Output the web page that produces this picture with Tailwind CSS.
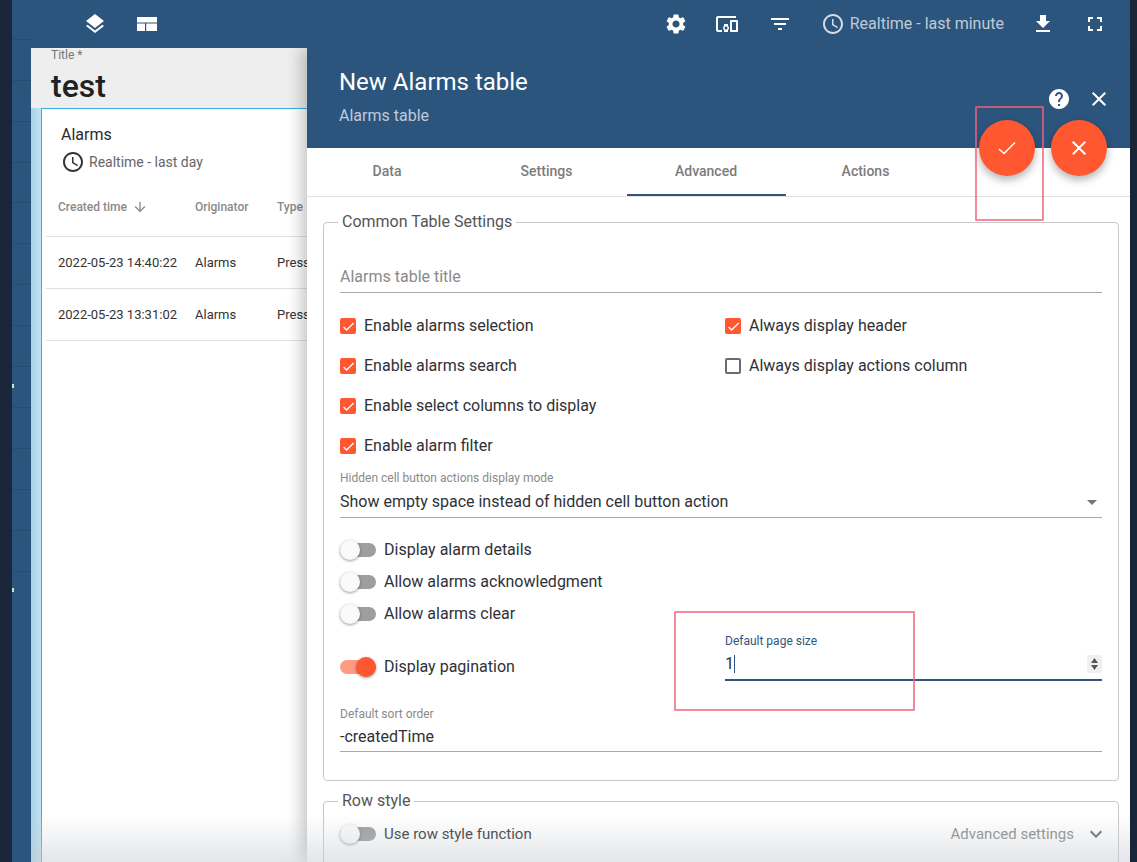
<!DOCTYPE html>
<html lang="en">
<head>
  <meta charset="UTF-8" />
  <title>New Alarms table</title>
  <script src="https://cdn.jsdelivr.net/npm/@tailwindcss/browser@4"></script>
</head>
<body class="bg-[#1a263a] font-['Roboto',sans-serif] text-[#2f3136]">
  <div class="relative flex w-[1137px] h-[862px] overflow-hidden bg-[#1a263a]">

    <!-- grid strip on the far left -->
    <div class="relative ml-[12px] w-[19px] h-full bg-[#2c557d] shrink-0">
      <div class="h-[40px] border-b border-[#274c70]"></div>
      <div class="h-[41px] border-b border-[#274c70]"></div>
      <div class="h-[41px] border-b border-[#274c70]"></div>
      <div class="h-[41px] border-b border-[#274c70]"></div>
      <div class="h-[40px] border-b border-[#274c70]"></div>
      <div class="h-[41px] border-b border-[#274c70]"></div>
      <div class="h-[41px] border-b border-[#274c70]"></div>
      <div class="h-[41px] border-b border-[#274c70]"></div>
      <div class="h-[41px] border-b border-[#274c70]"></div>
      <div class="h-[41px] border-b border-[#274c70]"></div>
      <div class="h-[41px] border-b border-[#274c70]"></div>
      <div class="h-[41px] border-b border-[#274c70]"></div>
      <div class="h-[41px] border-b border-[#274c70]"></div>
      <div class="h-[41px] border-b border-[#274c70]"></div>
      <div class="absolute left-0 top-[384px] w-[2px] h-[4px] bg-white/80"></div>
      <div class="absolute left-0 top-[588px] w-[2px] h-[4px] bg-white/80"></div>
    </div>

    <div class="flex flex-col w-[1099px] h-full shrink-0">
      <!-- top bar -->
      <div class="relative z-20 flex items-center h-[48px] bg-[#2c557d] text-white pl-[52px] pr-[23px]">
        <svg class="w-6 h-6" viewBox="0 0 24 24" fill="#fff"><path d="M11.99 18.54l-7.37-5.73L3 14.07l9 7 9-7-1.63-1.27-7.38 5.74zM12 16l7.36-5.73L21 9l-9-7-9 7 1.63 1.27L12 16z"/></svg>
        <svg class="w-6 h-6 ml-[28px]" viewBox="0 0 24 24" fill="#fff"><path d="M2 5h20v5.4H2zM2 11.6h8v7.4H2zM11.2 11.6H22v7.4H11.2z"/></svg>
        <svg class="w-6 h-6 ml-auto" viewBox="0 0 24 24" fill="#fff"><path d="M19.14 12.94c.04-.3.06-.61.06-.94 0-.32-.02-.64-.07-.94l2.03-1.58c.18-.14.23-.41.12-.61l-1.92-3.32c-.12-.22-.37-.29-.59-.22l-2.39.96c-.5-.38-1.03-.7-1.62-.94l-.36-2.54c-.04-.24-.24-.41-.48-.41h-3.84c-.24 0-.43.17-.47.41l-.36 2.54c-.59.24-1.13.57-1.62.94l-2.39-.96c-.22-.08-.47 0-.59.22L2.74 8.87c-.12.21-.08.47.12.61l2.03 1.58c-.05.3-.09.63-.09.94s.02.64.07.94l-2.03 1.58c-.18.14-.23.41-.12.61l1.92 3.32c.12.22.37.29.59.22l2.39-.96c.5.38 1.03.7 1.62.94l.36 2.54c.05.24.24.41.48.41h3.84c.24 0 .44-.17.47-.41l.36-2.54c.59-.24 1.13-.56 1.62-.94l2.39.96c.22.08.47 0 .59-.22l1.92-3.32c.12-.22.07-.47-.12-.61l-2.01-1.58zM12 15.6c-1.98 0-3.6-1.62-3.6-3.6s1.62-3.6 3.6-3.6 3.6 1.62 3.6 3.6-1.62 3.6-3.6 3.6z"/></svg>
        <svg class="w-6 h-6 ml-[27px]" viewBox="0 0 24 24" fill="#fff"><path d="M3 6h18V4H3c-1.1 0-2 .9-2 2v12c0 1.1.9 2 2 2h4v-2H3V6zm10 6H9v1.78c-.61.55-1 1.33-1 2.22s.39 1.67 1 2.22V20h4v-1.78c.61-.55 1-1.34 1-2.22s-.39-1.67-1-2.22V12zm-2 5.5c-.83 0-1.5-.67-1.5-1.5s.67-1.5 1.5-1.5 1.5.67 1.5 1.5-.67 1.5-1.5 1.5zM22 8h-6c-.5 0-1 .5-1 1v10c0 .5.5 1 1 1h6c.5 0 1-.5 1-1V9c0-.5-.5-1-1-1zm-1 10h-4v-8h4v8z"/></svg>
        <svg class="w-6 h-6 ml-[29px]" viewBox="0 0 24 24" fill="#fff"><path d="M10 18h4v-2h-4v2zM3 6v2h18V6H3zm3 7h12v-2H6v2z"/></svg>
        <svg class="w-6 h-6 ml-[29px]" viewBox="0 0 24 24" fill="#fff" fill-opacity="0.8"><path d="M11.99 2C6.47 2 2 6.48 2 12s4.47 10 9.99 10C17.52 22 22 17.52 22 12S17.52 2 11.99 2zM12 20c-4.42 0-8-3.58-8-8s3.58-8 8-8 8 3.58 8 8-3.58 8-8 8zm.5-13H11v6l5.25 3.15.75-1.23-4.5-2.67z"/></svg>
        <span class="ml-[5px] text-base text-white/70">Realtime - last minute</span>
        <svg class="w-6 h-6 ml-[27px]" viewBox="0 0 24 24" fill="#fff"><path d="M19 9h-4V3H9v6H5l7 7 7-7zM5 18v2h14v-2H5z"/></svg>
        <svg class="w-6 h-6 ml-[28px]" viewBox="0 0 24 24" fill="#fff"><path d="M7 14H5v5h5v-2H7v-3zm-2-4h2V7h3V5H5v5zm12 7h-3v2h5v-5h-2v3zM14 5v2h3v3h2V5h-5z"/></svg>
      </div>

      <div class="flex flex-1 min-h-0">
        <!-- dashboard behind the drawer -->
        <div class="flex flex-col w-[276px] shrink-0 overflow-hidden">
          <div class="h-[60px] bg-[#eeeeee] pl-[20px] pt-[1px]">
            <div class="text-xs leading-[12px] text-[#757575]">Title *</div>
            <div class="mt-[6px] text-[32px] leading-[38px] font-medium text-[#212121]">test</div>
          </div>
          <div class="flex flex-1 min-h-0">
            <div class="w-[10px] shrink-0 bg-gradient-to-r from-[#a6d2e7] to-[#c2e2f0]"></div>
            <div class="flex-1 bg-white border-l border-t border-[#3ab0e6] pl-[4px]">
              <div class="pl-[15px] pt-[16px] text-base leading-[20px] text-[#2b2b2b]">Alarms</div>
              <div class="flex items-center pl-[15px] mt-[5px] h-[24px]">
                <svg class="w-6 h-6" viewBox="0 0 24 24" fill="#333"><path d="M11.99 2C6.47 2 2 6.48 2 12s4.47 10 9.99 10C17.52 22 22 17.52 22 12S17.52 2 11.99 2zM12 20c-4.42 0-8-3.58-8-8s3.58-8 8-8 8 3.58 8 8-3.58 8-8 8zm.5-13H11v6l5.25 3.15.75-1.23-4.5-2.67z"/></svg>
                <span class="ml-[4px] text-sm text-[#666]">Realtime - last day</span>
              </div>
              <div class="flex items-center h-[63px] border-b border-[#e0e0e0] pt-[4px] pl-[12px] text-xs font-medium text-[#8a8a8a] whitespace-nowrap">
                <span class="w-[137px] flex items-center">Created time
                  <svg class="w-4 h-4 ml-[5px]" viewBox="0 0 24 24" fill="#8a8a8a"><path d="M20 12l-1.41-1.41L13 16.17V4h-2v12.17l-5.58-5.59L4 12l8 8 8-8z"/></svg>
                </span>
                <span class="w-[82px]">Originator</span>
                <span>Type</span>
              </div>
              <div class="flex items-center h-[52px] border-b border-[#e0e0e0] pl-[12px] text-[13px] text-[#333] whitespace-nowrap">
                <span class="w-[137px]">2022-05-23 14:40:22</span>
                <span class="w-[82px]">Alarms</span>
                <span>Press</span>
              </div>
              <div class="flex items-center h-[52px] border-b border-[#e0e0e0] pl-[12px] text-[13px] text-[#333] whitespace-nowrap">
                <span class="w-[137px]">2022-05-23 13:31:02</span>
                <span class="w-[82px]">Alarms</span>
                <span>Press</span>
              </div>
            </div>
          </div>
        </div>

        <!-- drawer -->
        <div class="relative z-10 flex flex-col w-[823px] shrink-0 bg-white shadow-[-6px_0_14px_rgba(0,0,0,0.22)]">
          <div class="h-[100px] bg-[#2c557d] pl-[32px] pt-[18px] shrink-0">
            <div class="text-2xl leading-[32px] text-white">New Alarms table</div>
            <div class="mt-[6px] text-base leading-[24px] text-white/70">Alarms table</div>
          </div>

          <div class="flex h-[49px] shrink-0 border-b border-[#e0e0e0] text-sm font-medium text-[#7c7c7c]">
            <div class="flex items-center justify-center w-[160px] border-b-2 border-transparent">Data</div>
            <div class="flex items-center justify-center w-[160px] pr-[1px] border-b-2 border-transparent">Settings</div>
            <div class="flex items-center justify-center w-[159px] pr-[1px] border-b-2 border-[#305680]">Advanced</div>
            <div class="flex items-center justify-center w-[160px] pr-[1px] border-b-2 border-transparent">Actions</div>
          </div>

          <div class="flex-1 min-h-0 overflow-hidden pl-[16px] pr-[11px] pt-[13px]">
            <fieldset class="border border-[#c8c8c8] rounded-[4px] pl-[16px] pr-[16px] pb-[28px]">
              <legend class="-ml-[2px] px-[4px] text-base leading-[24px] text-[#555]">Common Table Settings</legend>

              <div class="flex items-end h-[59px] border-b border-[#a8a8a8] pb-[3px] text-base leading-[24px] text-[#8a8a8a]">Alarms table title</div>

              <div class="grid grid-cols-[385px_1fr] mt-[13px] text-base">
                <div class="flex items-center h-[40px]">
                  <span class="flex items-center justify-center w-[16px] h-[16px] rounded-[2px] bg-[#ff5730]"><svg class="w-[15px] h-[15px]" viewBox="0 0 24 24" fill="#fff"><path d="M9 16.17L4.83 12l-1.42 1.41L9 19 21 7l-1.41-1.41z"/></svg></span>
                  <span class="ml-[8px]">Enable alarms selection</span>
                </div>
                <div class="flex items-center h-[40px]">
                  <span class="flex items-center justify-center w-[16px] h-[16px] rounded-[2px] bg-[#ff5730]"><svg class="w-[15px] h-[15px]" viewBox="0 0 24 24" fill="#fff"><path d="M9 16.17L4.83 12l-1.42 1.41L9 19 21 7l-1.41-1.41z"/></svg></span>
                  <span class="ml-[8px]">Always display header</span>
                </div>
                <div class="flex items-center h-[40px]">
                  <span class="flex items-center justify-center w-[16px] h-[16px] rounded-[2px] bg-[#ff5730]"><svg class="w-[15px] h-[15px]" viewBox="0 0 24 24" fill="#fff"><path d="M9 16.17L4.83 12l-1.42 1.41L9 19 21 7l-1.41-1.41z"/></svg></span>
                  <span class="ml-[8px]">Enable alarms search</span>
                </div>
                <div class="flex items-center h-[40px]">
                  <span class="w-[16px] h-[16px] rounded-[2px] border-2 border-[#6b6b6b]"></span>
                  <span class="ml-[8px]">Always display actions column</span>
                </div>
                <div class="flex items-center h-[40px]">
                  <span class="flex items-center justify-center w-[16px] h-[16px] rounded-[2px] bg-[#ff5730]"><svg class="w-[15px] h-[15px]" viewBox="0 0 24 24" fill="#fff"><path d="M9 16.17L4.83 12l-1.42 1.41L9 19 21 7l-1.41-1.41z"/></svg></span>
                  <span class="ml-[8px]">Enable select columns to display</span>
                </div>
                <div></div>
                <div class="flex items-center h-[40px]">
                  <span class="flex items-center justify-center w-[16px] h-[16px] rounded-[2px] bg-[#ff5730]"><svg class="w-[15px] h-[15px]" viewBox="0 0 24 24" fill="#fff"><path d="M9 16.17L4.83 12l-1.42 1.41L9 19 21 7l-1.41-1.41z"/></svg></span>
                  <span class="ml-[8px]">Enable alarm filter</span>
                </div>
              </div>

              <div class="mt-[4px] border-b border-[#a8a8a8] pb-[3px]">
                <div class="text-xs leading-[16px] text-[#8a8a8a]">Hidden cell button actions display mode</div>
                <div class="flex items-center justify-between mt-[4px] text-base leading-[24px]">
                  <span>Show empty space instead of hidden cell button action</span>
                  <span class="w-0 h-0 mr-[5px] border-x-[5px] border-x-transparent border-t-[5px] border-t-[#757575]"></span>
                </div>
              </div>

              <div class="mt-[16px] text-base">
                <div class="flex items-center h-[32px]">
                  <span class="relative block w-[36px] h-[14px] rounded-full bg-[#9e9e9e]"><span class="absolute left-0 -top-[3px] w-[20px] h-[20px] rounded-full bg-[#fafafa] shadow-[0_1px_3px_rgba(0,0,0,0.4)]"></span></span>
                  <span class="ml-[8px]">Display alarm details</span>
                </div>
                <div class="flex items-center h-[32px]">
                  <span class="relative block w-[36px] h-[14px] rounded-full bg-[#9e9e9e]"><span class="absolute left-0 -top-[3px] w-[20px] h-[20px] rounded-full bg-[#fafafa] shadow-[0_1px_3px_rgba(0,0,0,0.4)]"></span></span>
                  <span class="ml-[8px]">Allow alarms acknowledgment</span>
                </div>
                <div class="flex items-center h-[32px]">
                  <span class="relative block w-[36px] h-[14px] rounded-full bg-[#9e9e9e]"><span class="absolute left-0 -top-[3px] w-[20px] h-[20px] rounded-full bg-[#fafafa] shadow-[0_1px_3px_rgba(0,0,0,0.4)]"></span></span>
                  <span class="ml-[8px]">Allow alarms clear</span>
                </div>
              </div>

              <div class="grid grid-cols-[385px_1fr] mt-[3px] text-base">
                <div class="flex items-center h-[28px] mt-[20px]">
                  <span class="relative block w-[36px] h-[14px] rounded-full bg-[#ff9a83]"><span class="absolute right-0 -top-[3px] w-[20px] h-[20px] rounded-full bg-[#ff5730] shadow-[0_1px_3px_rgba(0,0,0,0.4)]"></span></span>
                  <span class="ml-[8px]">Display pagination</span>
                </div>
                <div class="border-b-2 border-[#305680] pb-[3px]">
                  <div class="text-xs leading-[16px] text-[#305680]">Default page size</div>
                  <div class="flex items-center justify-between mt-[3px] leading-[24px]">
                    <span class="flex items-center"><span>1</span><span class="w-px h-[18px] bg-[#305680]"></span></span>
                    <span class="flex items-center justify-center w-[15px] h-[18px] bg-[#f0f0f0]">
                      <svg class="w-[9px] h-[14px]" viewBox="0 0 9 14" fill="#555"><path d="M4.5 1L8 6H1zM4.5 13L1 8h7z"/></svg>
                    </span>
                  </div>
                </div>
              </div>

              <div class="mt-[25px] border-b border-[#a8a8a8] pb-[2px]">
                <div class="text-xs leading-[16px] text-[#8a8a8a]">Default sort order</div>
                <div class="mt-[3px] text-base leading-[24px]">-createdTime</div>
              </div>
            </fieldset>

            <fieldset class="mt-[8px] border border-[#c8c8c8] rounded-[4px] pl-[16px] pr-[16px] pt-[5px] pb-[16px]">
              <legend class="-ml-[2px] px-[4px] text-base leading-[24px] text-[#555]">Row style</legend>
              <div class="flex items-center h-[32px]">
                <span class="relative block w-[36px] h-[14px] rounded-full bg-[#9e9e9e]"><span class="absolute left-0 -top-[3px] w-[20px] h-[20px] rounded-full bg-[#fafafa] shadow-[0_1px_3px_rgba(0,0,0,0.4)]"></span></span>
                <span class="ml-[8px] text-[15px]">Use row style function</span>
                <span class="ml-auto text-[15px] text-[#8a8a8a]">Advanced settings</span>
                <svg class="w-6 h-6 ml-[10px] -mr-[6px]" viewBox="0 0 24 24" fill="#666"><path d="M16.59 8.59L12 13.17 7.41 8.59 6 10l6 6 6-6z"/></svg>
              </div>
            </fieldset>
          </div>

          <!-- help / close -->
          <svg class="absolute left-[740px] top-[39px] w-6 h-6" viewBox="0 0 24 24" fill="#fff"><path d="M12 2C6.48 2 2 6.48 2 12s4.48 10 10 10 10-4.48 10-10S17.52 2 12 2zm1 17h-2v-2h2v2zm2.07-7.75l-.9.92C13.45 12.9 13 13.5 13 15h-2v-.5c0-1.1.45-2.1 1.17-2.83l1.24-1.26c.37-.36.59-.86.59-1.41 0-1.1-.9-2-2-2s-2 .9-2 2H8c0-2.21 1.79-4 4-4s4 1.79 4 4c0 .88-.36 1.68-.93 2.25z"/></svg>
          <svg class="absolute left-[780px] top-[39px] w-6 h-6" viewBox="0 0 24 24" fill="#fff"><path d="M19 6.41L17.59 5 12 10.59 6.41 5 5 6.41 10.59 12 5 17.59 6.41 19 12 13.41 17.59 19 19 17.59 13.41 12z"/></svg>

          <!-- floating buttons -->
          <div class="absolute left-[672px] top-[72px] flex items-center justify-center w-[56px] h-[56px] rounded-full bg-[#ff5730] shadow-[0_4px_8px_rgba(0,0,0,0.3)]">
            <svg class="w-6 h-6" viewBox="0 0 24 24" fill="none" stroke="#fff" stroke-width="1.5"><path d="M4 13L9 17.5 20 6.5"/></svg>
          </div>
          <div class="absolute left-[744px] top-[72px] flex items-center justify-center w-[56px] h-[56px] rounded-full bg-[#ff5730] shadow-[0_4px_8px_rgba(0,0,0,0.3)]">
            <svg class="w-6 h-6" viewBox="0 0 24 24" fill="#fff"><path d="M19 6.41L17.59 5 12 10.59 6.41 5 5 6.41 10.59 12 5 17.59 6.41 19 12 13.41 17.59 19 19 17.59 13.41 12z"/></svg>
          </div>
        </div>
      </div>
    </div>

    <!-- annotation boxes and bottom fade -->
    <div class="absolute left-[975px] top-[106px] w-[69px] h-[115px] z-30 border-2 border-[#f0607c]/75 rounded-[1px]"></div>
    <div class="absolute left-[674px] top-[611px] w-[241px] h-[100px] z-30 border-2 border-[#f0607c]/75 rounded-[1px]"></div>
    <div class="absolute left-[31px] bottom-0 w-[1099px] h-[47px] z-30 bg-gradient-to-b from-[#c8ccd2]/0 to-[#c8ccd2]/50"></div>
  </div>
</body>
</html>
